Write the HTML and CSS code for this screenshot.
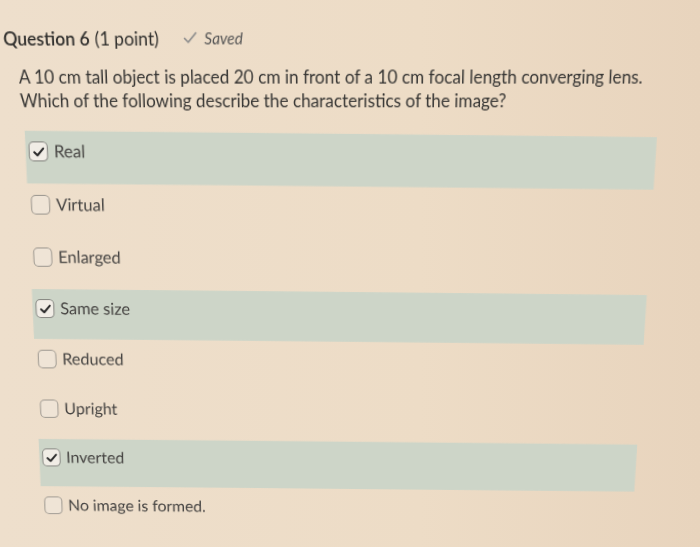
FILE: index.html
```html
<!DOCTYPE html>
<html>
<head>
<meta charset="utf-8">
<link rel="stylesheet" href="styles.css">
</head>
<body>
<div class="page">
  <div class="head">
    <span class="qnum">Question 6</span>
    <span class="pts">(1 point)</span>
    <span class="saved">
      <svg class="saved-ico" viewBox="0 0 14 12" width="14" height="12"><path d="M1.5 6.5 L5 10 L12.5 1.5" fill="none" stroke="#8d8d8d" stroke-width="1.6" stroke-linecap="round" stroke-linejoin="round"/></svg>
      <em>Saved</em>
    </span>
  </div>
  <p class="qtext">A 10 cm tall object is placed 20 cm in front of a 10 cm focal length converging lens.<br>Which of the following describe the characteristics of the image?</p>
  <ul class="opts">
    <li class="opt sel"><span class="box on"><svg viewBox="0 0 12 10" width="12" height="10"><path d="M1.5 5.2 L4.6 8.2 L10.5 1.6" fill="none" stroke="#2b2b2b" stroke-width="2" stroke-linecap="round" stroke-linejoin="round"/></svg></span><span class="lbl">Real</span></li>
    <li class="opt"><span class="box"></span><span class="lbl">Virtual</span></li>
    <li class="opt"><span class="box"></span><span class="lbl">Enlarged</span></li>
    <li class="opt sel"><span class="box on"><svg viewBox="0 0 12 10" width="12" height="10"><path d="M1.5 5.2 L4.6 8.2 L10.5 1.6" fill="none" stroke="#2b2b2b" stroke-width="2" stroke-linecap="round" stroke-linejoin="round"/></svg></span><span class="lbl">Same size</span></li>
    <li class="opt"><span class="box"></span><span class="lbl">Reduced</span></li>
    <li class="opt"><span class="box"></span><span class="lbl">Upright</span></li>
    <li class="opt sel"><span class="box on"><svg viewBox="0 0 12 10" width="12" height="10"><path d="M1.5 5.2 L4.6 8.2 L10.5 1.6" fill="none" stroke="#2b2b2b" stroke-width="2" stroke-linecap="round" stroke-linejoin="round"/></svg></span><span class="lbl">Inverted</span></li>
    <li class="opt"><span class="box"></span><span class="lbl">No image is formed.</span></li>
  </ul>
</div>
</body>
</html>
```
FILE: styles.css
```css
html, body {
  margin: 0;
  padding: 0;
}
body {
  width: 700px;
  height: 547px;
  overflow: hidden;
  background: linear-gradient(90deg, #eedfcc 0%, #eddcc6 60%, #e8d4bd 100%);
  font-family: Lato, "Open Sans", sans-serif;
  color: #3c3b39;
}
.page {
  width: 700px;
  padding: 32px 0 0 0;
  transform-origin: 339px 223px;
  transform: translateY(5px) perspective(500px) rotateX(-5deg) scaleY(1.032);
}
.head {
  display: flex;
  align-items: center;
  height: 24px;
  padding-left: 14px;
  font-size: 17px;
  color: #2f2e2c;
}
.qnum {
  font-weight: 600;
}
.pts {
  margin-left: 5px;
}
.saved {
  display: flex;
  align-items: center;
  margin-left: 23px;
  font-size: 15px;
  color: #555;
}
.saved-ico {
  margin-right: 7px;
}
.qtext {
  margin: 13px 0 0 27px;
  font-size: 16.8px;
  line-height: 22px;
  color: #363533;
}
.opts {
  list-style: none;
  margin: 20px 0 0 0;
  padding: 0 50px 0 28px;
  transform: rotate(0.55deg);
}
.opt {
  display: flex;
  align-items: flex-start;
  height: 50px;
  box-sizing: border-box;
  padding: 10px 0 0 3px;
  margin-bottom: 1px;
}
.opt.sel {
  background: #cdd5c8;
}
.box {
  width: 19px;
  height: 19px;
  box-sizing: border-box;
  border: 1.5px solid #9c978f;
  border-radius: 5px;
  background: #efe4d6;
  display: flex;
  align-items: center;
  justify-content: center;
  flex: none;
}
.box.on {
  background: #f1ede6;
  border-color: #858580;
}
.lbl {
  margin-left: 6px;
  font-size: 16.5px;
  line-height: 19px;
  color: #464442;
}
```
